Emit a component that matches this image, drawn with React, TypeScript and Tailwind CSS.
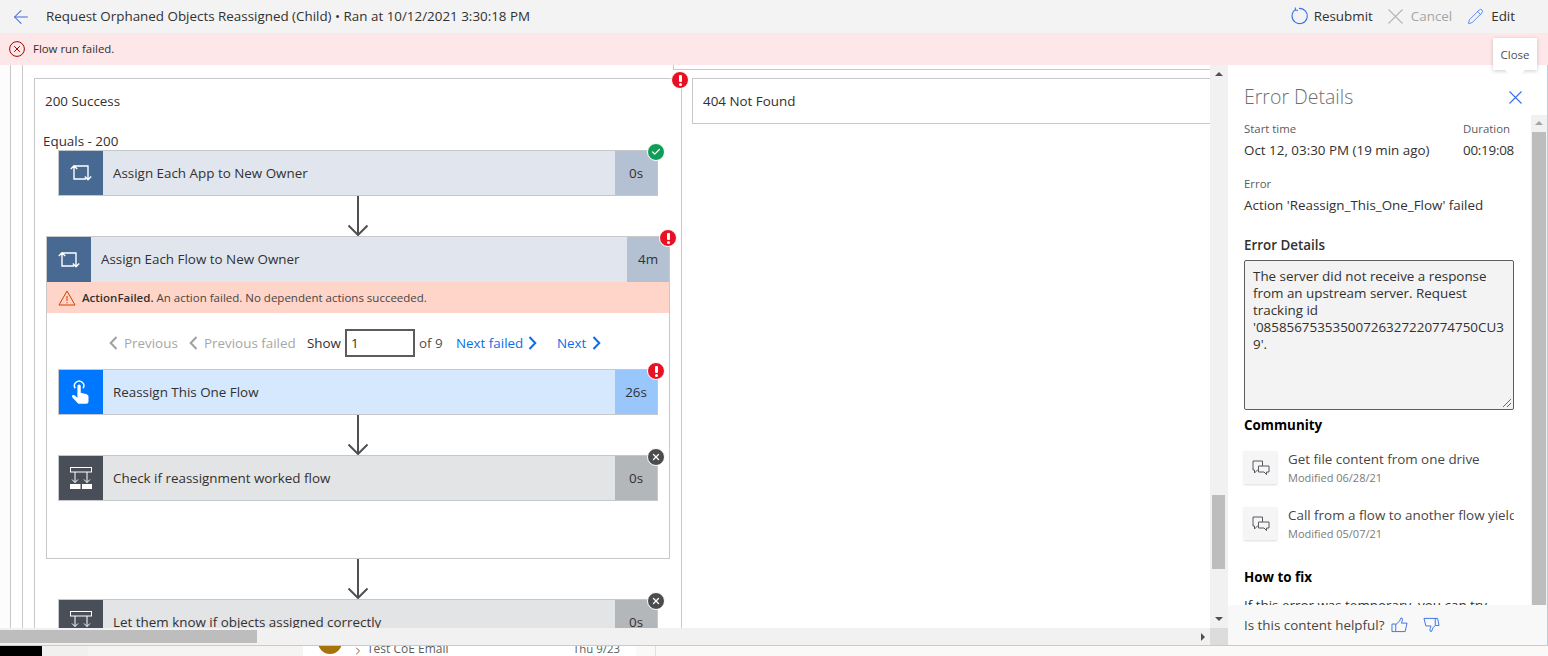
import { ArrowLeft, ChevronRight, Pencil, Check, X } from "lucide-react";
import type { ReactNode } from "react";

const tones = {
  loop: { icon: "bg-[#486991]", body: "bg-[#e1e6ee]", time: "bg-[#b3c1d2]" },
  manual: { icon: "bg-[#0077ff]", body: "bg-[#d5e8fd]", time: "bg-[#99c7fc]" },
  skipped: { icon: "bg-[#484f58]", body: "bg-[#e3e4e6]", time: "bg-[#b4b7b9]" },
};

const LoopIcon = () => (
  <svg width="24" height="20" viewBox="0 0 24 20" fill="none" stroke="#fff" strokeWidth="1.4">
    <path d="M5 3V16H17M5 3H19V16.5M1.8 6L5 2.8L8.2 6M15.8 13.5L19 16.8L22.2 13.5" />
  </svg>
);

const HandIcon = () => (
  <svg width="20" height="26" viewBox="0 0 24 30" fill="none">
    <path d="M5 10.5a5.6 5.6 0 1 1 9.5 0" stroke="#fff" strokeWidth="1.8" />
    <path
      d="M7.7 8a2 2 0 0 1 4 0v8l6.3 1.4c2 .5 3 1.6 3 3.3V26a3 3 0 0 1-3 3h-8c-1.2 0-2-.6-2.7-1.5L1.5 21.2c-.7-1-.3-2 .6-2.5 1-.4 2-.1 2.8.7l2.8 2.4z"
      fill="#fff"
    />
  </svg>
);

const ConditionIcon = () => (
  <svg width="22" height="22" viewBox="0 0 22 22" fill="none" stroke="#fff" strokeWidth="1">
    <rect x="0.5" y="0.5" width="21" height="4.5" />
    <path d="M5 5V15.5M2 12.5L5 15.5L8 12.5M17 5V15.5M14 12.5L17 15.5L20 12.5" />
    <rect x="0" y="17" width="10.5" height="5" fill="#fff" stroke="none" />
    <rect x="12" y="17" width="10" height="5" fill="#fff" stroke="none" />
  </svg>
);

const Cross = ({ size, color, className }: { size: number; color: string; className?: string }) => (
  <svg width={size} height={size} viewBox={`0 0 ${size} ${size}`} fill="none" stroke={color} strokeWidth="1.1" className={className}>
    <path d={`M0.5 0.5L${size - 0.5} ${size - 0.5}M${size - 0.5} 0.5L0.5 ${size - 0.5}`} />
  </svg>
);

const PagerChevron = ({ dir, color, className }: { dir: "left" | "right"; color: string; className?: string }) => (
  <svg width="9" height="14" viewBox="0 0 9 14" fill="none" stroke={color} strokeWidth="2" className={`shrink-0 ${className ?? ""}`}>
    <path d={dir === "left" ? "M7.5 1L1.7 7L7.5 13" : "M1.5 1L7.3 7L1.5 13"} />
  </svg>
);

const Badge = ({ kind, className }: { kind: "error" | "success" | "cancel"; className: string }) => {
  const bg = kind === "error" ? "bg-[#e81123]" : kind === "success" ? "bg-[#0f9d58]" : "bg-[#4c4c4c]";
  return (
    <div
      className={`absolute z-10 w-[18px] h-[18px] rounded-full border border-white flex items-center justify-center text-white ${bg} ${className}`}
    >
      {kind === "error" && <span className="w-[3px] h-[11px] flex flex-col justify-between items-center"><span className="w-[3px] h-[7px] bg-white rounded-[1px]" /><span className="w-[3px] h-[3px] bg-white rounded-full" /></span>}
      {kind === "success" && <Check size={10} strokeWidth={3} />}
      {kind === "cancel" && <X size={10} strokeWidth={3} />}
    </div>
  );
};

const Arrow = () => (
  <svg width="22" height="40" viewBox="0 0 22 40" fill="none" stroke="#505050" strokeWidth="2" className="block shrink-0">
    <path d="M11 0V39M1.5 29.5L11 39L20.5 29.5" />
  </svg>
);

const FlowNode = ({
  tone,
  icon,
  title,
  time,
  badge,
}: {
  tone: keyof typeof tones;
  icon: ReactNode;
  title: string;
  time: string;
  badge: "error" | "success" | "cancel";
}) => (
  <div className="relative shrink-0 w-[600px] h-[46px] border border-[#c4c8cc] flex">
    <div className={`w-[44px] flex items-center justify-center ${tones[tone].icon}`}>{icon}</div>
    <div className={`flex-1 pl-[10px] flex items-center text-[13.4px] ${tones[tone].body}`}>{title}</div>
    <div className={`w-[42px] flex items-center justify-center text-[13.4px] ${tones[tone].time}`}>{time}</div>
    <Badge kind={badge} className="-top-[8px] -right-[8px]" />
  </div>
);

const Pager = () => (
  <div className="h-[56px] pl-[62px] pt-[4px] flex items-center text-[13.4px] leading-[18px] whitespace-nowrap">
    <PagerChevron dir="left" color="#a0a0a0" />
    <span className="ml-[6px] w-[53px] text-[#a6a6a6]">Previous</span>
    <PagerChevron dir="left" color="#a0a0a0" className="ml-[12px]" />
    <span className="ml-[6px] w-[91px] text-[#a6a6a6]">Previous failed</span>
    <span className="ml-[12px] w-[38px]">Show</span>
    <div className="w-[70px] h-[28px] border-2 border-[#5c5c5c] pl-[4px] flex items-center">1</div>
    <span className="ml-[4px] w-[37px] text-[#505050]">of 9</span>
    <span className="text-[#0a6ee8] w-[72px]">Next failed</span>
    <PagerChevron dir="right" color="#0a6ee8" />
    <span className="ml-[20px] w-[35px] text-[#0a6ee8]">Next</span>
    <PagerChevron dir="right" color="#0a6ee8" />
  </div>
);

const ForEachCard = () => (
  <div className="relative shrink-0 w-[624px] h-[323px] border border-[#c8c8c8] flex flex-col items-center">
    <div className="w-full h-[45px] flex shrink-0">
      <div className="w-[44px] bg-[#486991] flex items-center justify-center"><LoopIcon /></div>
      <div className="flex-1 bg-[#e1e6ee] pl-[10px] pb-[2px] flex items-center text-[13.4px]">Assign Each Flow to New Owner</div>
      <div className="w-[42px] bg-[#b3c1d2] pb-[2px] flex items-center justify-center text-[13.4px]">4m</div>
    </div>
    <Badge kind="error" className="-top-[8px] -right-[8px]" />
    <div className="w-full h-[31px] shrink-0 bg-[#fed5c8] flex items-center pl-[11px] text-[11.5px] text-[#484644]">
      <svg width="18" height="16" viewBox="0 0 18 16" fill="none" stroke="#d83b01" strokeWidth="1">
        <path d="M9 1L17 15H1Z" />
        <path d="M9 6V11M9 12.2V13.4" />
      </svg>
      <b className="ml-[6px] font-semibold text-[#323130]">ActionFailed.</b>
      <span className="ml-[3px]">An action failed. No dependent actions succeeded.</span>
    </div>
    <div className="w-full shrink-0"><Pager /></div>
    <FlowNode tone="manual" icon={<HandIcon />} title="Reassign This One Flow" time="26s" badge="error" />
    <Arrow />
    <FlowNode tone="skipped" icon={<ConditionIcon />} title="Check if reassignment worked flow" time="0s" badge="cancel" />
  </div>
);

const Canvas = () => (
  <div className="flex-1 min-h-0 overflow-hidden bg-[#fcfcfc] pl-[10px]">
    <div className="h-full border-l border-[#c8c8c8] pl-[11px] bg-white">
      <div className="h-full border-l border-[#c8c8c8] pl-[11px]">
        <div className="ml-[639px] h-[5px] border-l border-b border-[#c8c8c8]" />
        <div className="flex items-start pt-[8px]">
          <div className="relative shrink-0 w-[648px] h-[700px] border border-[#c8c8c8] text-[13.4px] leading-[18px]">
            <Badge kind="error" className="-top-[8px] -right-[8px]" />
            <div className="pl-[10px] pt-[13px]">200 Success</div>
            <div className="pl-[8px] mt-[22px]">Equals - 200</div>
            <div className="ml-[11px] w-[624px] flex flex-col items-center">
              <FlowNode tone="loop" icon={<LoopIcon />} title="Assign Each App to New Owner" time="0s" badge="success" />
              <Arrow />
              <ForEachCard />
              <Arrow />
              <FlowNode tone="skipped" icon={<ConditionIcon />} title="Let them know if objects assigned correctly" time="0s" badge="cancel" />
            </div>
          </div>
          <div className="shrink-0 ml-[10px] w-[560px] h-[46px] border border-[#c8c8c8] pl-[10px] pt-[1px] flex items-center text-[13.4px]">
            404 Not Found
          </div>
        </div>
      </div>
    </div>
  </div>
);

const CommunityItem = ({ title, date }: { title: string; date: string }) => (
  <div className="flex h-[33px] mb-[23px]">
    <div className="w-[33px] h-[33px] shrink-0 bg-[#f5f5f5] shadow-[0_1px_2px_rgba(0,0,0,0.15)] flex items-center justify-center">
      <svg width="18" height="16" viewBox="0 0 18 16" fill="none" stroke="#5b5561" strokeWidth="1">
        <path d="M10.5 6V1H1V10H2.5V13L5.5 10H6" />
        <path d="M6.5 6H17V12H14.5V14.5L12 12H6.5Z" />
      </svg>
    </div>
    <div className="ml-[11px] min-w-0 flex-1 overflow-hidden whitespace-nowrap">
      <div className="text-[13.4px] leading-[18px] -mt-[1px] text-[#484644]">{title}</div>
      <div className="text-[11px] leading-[14px] mt-[3px] text-[#7a7a7a]">{date}</div>
    </div>
  </div>
);

const ErrorPanel = () => (
  <div className="w-[320px] shrink-0 bg-white flex flex-col border-r border-[#b8cfe0]">
    <div className="h-[50px] shrink-0 pl-[16px] pr-[25px] pt-[18px] flex justify-between items-start">
      <span className="text-[19.5px] leading-[28px] font-light text-[#6f6f6f]">Error Details</span>
      <Cross size={13} color="#3a6fe8" className="mt-[8px]" />
    </div>
    <div className="flex-1 min-h-0 flex overflow-hidden">
      <div className="w-[286px] pl-[16px] pt-[6px] text-[#323130]">
        <div className="flex justify-between">
          <div>
            <div className="text-[11.4px] leading-[16px] text-[#5c5c5c]">Start time</div>
            <div className="text-[13.4px] leading-[18px] mt-[4px] whitespace-nowrap">Oct 12, 03:30 PM (19 min ago)</div>
          </div>
          <div className="w-[51px] whitespace-nowrap">
            <div className="text-[11.4px] leading-[16px] text-[#5c5c5c]">Duration</div>
            <div className="text-[13.4px] leading-[18px] mt-[4px] tracking-[-0.25px]">00:19:08</div>
          </div>
        </div>
        <div className="text-[11.4px] leading-[16px] mt-[17px] text-[#5c5c5c]">Error</div>
        <div className="text-[13.4px] leading-[18px] mt-[4px]">Action 'Reassign_This_One_Flow' failed</div>
        <div className="text-[13.4px] leading-[18px] font-semibold mt-[22px]">Error Details</div>
        <div className="mt-[6px] h-[150px] w-[270px] bg-[#f3f3f3] border border-[#605e5c] rounded-[2px] relative px-[8px] pt-[7px] text-[13.4px] leading-[17px]">
          <p className="break-words">The server did not receive a response from an upstream server. Request tracking id '08585675353500726327220774750CU39'.</p>
          <svg width="10" height="10" viewBox="0 0 10 10" className="absolute right-[1px] bottom-[1px]" stroke="#666" fill="none">
            <path d="M1 9L9 1M5 9L9 5" />
          </svg>
        </div>
        <div className="text-[13.4px] leading-[18px] font-bold text-black mt-[6px]">Community</div>
        <div className="mt-[17px] w-[270px]">
          <CommunityItem title="Get file content from one drive" date="Modified 06/28/21" />
          <CommunityItem title="Call from a flow to another flow yielding a bad gateway" date="Modified 05/07/21" />
        </div>
        <div className="text-[13.4px] leading-[18px] font-bold text-black mt-[28px]">How to fix</div>
        <div className="text-[13.4px] leading-[18px] mt-[10px] whitespace-nowrap">If this error was temporary, you can try</div>
      </div>
      <div className="w-[16px] ml-[17px] shrink-0 bg-[#f1f1f1] flex flex-col items-center pt-[6px]">
        <span className="w-0 h-0 border-x-[4px] border-x-transparent border-b-[4px] border-b-[#a3a3a3]" />
        <div className="w-[14px] flex-1 mt-[7px] bg-[#bdbdbd]" />
      </div>
    </div>
    <div className="h-[40px] shrink-0 bg-[#f8f8f8] pl-[16px] flex items-center text-[13.4px] text-[#484644]">
      <span>Is this content helpful?</span>
      <svg width="17" height="16" viewBox="0 0 18 17" fill="none" stroke="#3a6fe8" strokeWidth="1" className="ml-[7px]">
        <path d="M1 7.5H5V15.5H1ZM5 8L9 4.5L10.5 1L12 1.5C12.5 3.5 11.5 5 11 6.5H17L15 15.5H5" />
      </svg>
      <svg width="17" height="16" viewBox="0 0 18 17" fill="none" stroke="#3a6fe8" strokeWidth="1" className="ml-[15px]">
        <path d="M1 1.5H15.5L17 9H13L10.5 11.5L9 15.5L7.5 15C7 13 8 11 8.5 9.5H3L1 1.5ZM13 1.5V9" />
      </svg>
    </div>
  </div>
);

export default function App() {
  return (
    <div className="relative w-[1548px] h-[656px] overflow-hidden bg-[#faf9f8] flex flex-col font-['Open_Sans','Noto_Sans',sans-serif] text-[#323130]">
      <div className="h-[33px] shrink-0 bg-[#f3f3f3] flex items-center text-[13.4px]">
        <ArrowLeft size={22} strokeWidth={1.1} className="ml-[10px] text-[#4169e1]" />
        <span className="ml-[14px]">Request Orphaned Objects Reassigned (Child) • Ran at 10/12/2021 3:30:18 PM</span>
        <div className="ml-auto pr-[33px] flex items-center">
          <svg width="18" height="18" viewBox="0 0 18 18" fill="none" stroke="#3a6fe8" strokeWidth="1.1">
            <path d="M5.5 2.6A7.6 7.6 0 1 0 9 1.4M5.3 0.6V3.2H8" />
          </svg>
          <span className="ml-[6px]">Resubmit</span>
          <Cross size={15} color="#b5b5b5" className="ml-[15px]" />
          <span className="ml-[8px] text-[#a6a6a6]">Cancel</span>
          <Pencil size={17} strokeWidth={1.1} className="ml-[15px] text-[#3a6fe8]" />
          <span className="ml-[7px]">Edit</span>
        </div>
      </div>
      <div className="h-[32px] shrink-0 bg-[#fde7e9] flex items-center pl-[9px] text-[11.4px]">
        <svg width="16" height="16" viewBox="0 0 16 16" fill="none" stroke="#a80000" strokeWidth="1">
          <circle cx="8" cy="8" r="7.4" />
          <path d="M5.2 5.2L10.8 10.8M10.8 5.2L5.2 10.8" />
        </svg>
        <span className="ml-[8px]">Flow run failed.</span>
      </div>
      <div className="h-[580px] shrink-0 flex border-b border-[#b8cfe0] box-content">
        <div className="w-[1228px] shrink-0 flex flex-col">
          <div className="flex-1 min-h-0 flex">
            <Canvas />
            <div className="w-[18px] shrink-0 bg-[#f1f1f1] flex flex-col items-center pr-[1px]">
              <span className="mt-[7px] w-0 h-0 border-x-[4px] border-x-transparent border-b-[4px] border-b-[#505050]" />
              <div className="mt-[419px] w-[13px] h-[74px] bg-[#bdbdbd]" />
              <span className="mt-[48px] w-0 h-0 border-x-[4px] border-x-transparent border-t-[4px] border-t-[#505050]" />
            </div>
          </div>
          <div className="h-[17px] shrink-0 flex">
            <div className="flex-1 bg-[#f1f1f1] flex items-center pr-[5px]">
              <div className="w-[257px] h-[13px] bg-[#bdbdbd]" />
              <span className="ml-auto w-0 h-0 border-y-[4px] border-y-transparent border-l-[4px] border-l-[#505050]" />
            </div>
            <div className="w-[18px] bg-[#dcdcdc]" />
          </div>
        </div>
        <ErrorPanel />
      </div>
      <div className="flex-1 min-h-0 flex overflow-hidden text-[12px] leading-[14px]">
        <div className="w-[42px] bg-black" />
        <div className="w-[46px] bg-[#f1f0ef]" />
        <div className="w-[215px] bg-[#f5f4f3]" />
        <div className="w-[333px] bg-white flex items-start">
          <span className="ml-[15px] -mt-[6px] w-[24px] h-[14px] rounded-b-full bg-[#a8720a]" />
          <ChevronRight size={12} className="ml-[10px] -mt-[1px] text-[#a0522d]" />
          <span className="ml-[3px] -mt-[4px] text-[#605e5c]">Test CoE Email</span>
          <span className="ml-auto mr-[16px] -mt-[4px] text-[11.4px] text-[#605e5c]">Thu 9/23</span>
        </div>
        <div className="w-[19px] bg-[#faf9f8]" />
        <div className="flex-1 bg-[#faf9f8] border-l border-[#e1e1e1]" />
      </div>
      <div className="absolute left-[1493px] top-[38px] w-[44px] h-[32px] bg-white shadow-[0_1px_4px_rgba(0,0,0,0.2)] flex items-center justify-center pt-[1px] text-[11.5px] text-[#505050]">
        Close
        <span className="absolute left-[15px] -bottom-[7px] w-[14px] h-[14px] rotate-45 bg-white" />
      </div>
    </div>
  );
}
